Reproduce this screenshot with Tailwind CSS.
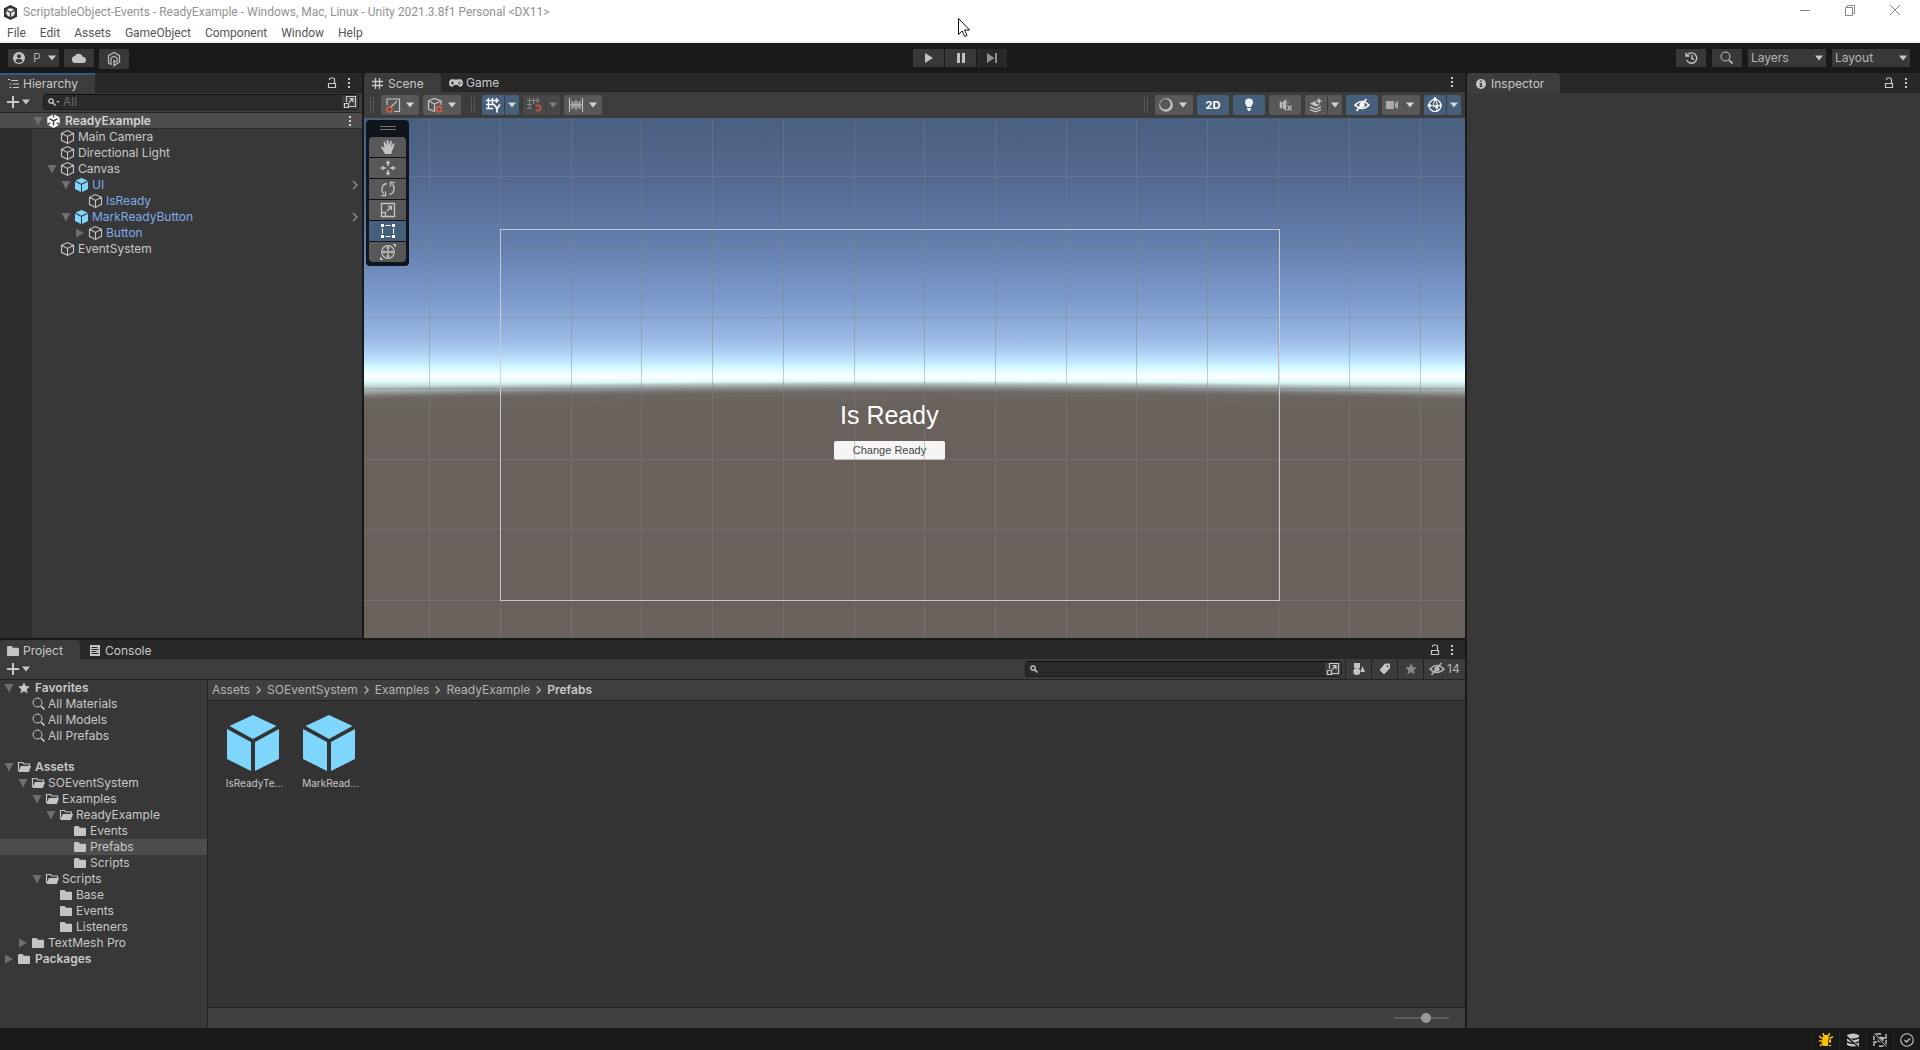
<!DOCTYPE html>
<html lang="en">
<head>
<meta charset="utf-8">
<title>ScriptableObject-Events - ReadyExample - Unity</title>
<script src="https://cdn.jsdelivr.net/npm/@tailwindcss/browser@4"></script>
</head>
<body class="relative flex h-screen min-w-[1280px] flex-col overflow-hidden bg-[#191919] font-[Inter,sans-serif] text-xs leading-4 text-[#c8c8c8]">

<!-- Icon library -->
<svg class="hidden">
  <symbol id="down" viewBox="0 0 10 10"><path d="M1 2.5h8L5 7.5z" fill="currentColor"/></symbol>
  <symbol id="fold-open" viewBox="0 0 14 16"><path d="M2.500 4h9L7 12.500z" fill="#6e6e6e"/></symbol>
  <symbol id="fold-shut" viewBox="0 0 14 16"><path d="M3 3.500v9L11 8z" fill="#6e6e6e"/></symbol>
  <symbol id="chev" viewBox="0 0 8 12"><path d="M2 2l4 4-4 4" fill="none" stroke="currentColor" stroke-width="1.5"/></symbol>
  <symbol id="dots" viewBox="0 0 4 12"><path d="M1 1h2v2H1zM1 5h2v2H1zM1 9h2v2H1z" fill="currentColor"/></symbol>
  <symbol id="lock" viewBox="0 0 10 12"><path d="M1.500 6.500h7v4h-7zM2.500 3V2.500a1.500 1.500 0 0 1 1.500-1.500h2a1.500 1.500 0 0 1 1.500 1.500v4" fill="none" stroke="currentColor" stroke-width="1.200"/></symbol>
  <symbol id="plus" viewBox="0 0 12 12"><path d="M5 0h2v5h5v2H7v5H5V7H0V5h5z" fill="currentColor"/></symbol>
  <symbol id="cube" viewBox="0 0 16 16"><path d="M8.500 1.500l6 2.800v7l-6 3.200-6-3.200v-7zM2.500 4.300l6 3.200 6-3.200M8.500 7.500v7" fill="none" stroke="#c4c4c4" stroke-width="1.100"/></symbol>
  <symbol id="prefab" viewBox="0 0 16 16"><path d="M8.500 1l6 2.600-6 3.200-6-3.200z" fill="#7fd6fd"/><path d="M2 4.600l6 3.200V15l-6-3zM15 4.600l-6 3.200V15l6-3z" fill="#7fd6fd"/></symbol>
  <symbol id="prefab-big" viewBox="0 0 52 56"><path d="M26 0l23.500 11L26 24 2.500 11zM0 14l24 13v29L0 44zM52 14L28 27v29l24-12z" fill="#7fd6fd"/></symbol>
  <symbol id="unity" viewBox="0 0 16 16"><path d="M8.500 1l6.200 3.500v7L8.500 15l-6.200-3.500v-7z" fill="#fff"/><path d="M8.500 8V12.500M8.500 8l-4-2.400M8.500 8l4-2.400M8.500 1v3.500M2.300 11.500l3-1.700M14.700 11.500l-3-1.700" stroke="#4a4a4a" stroke-width="1.500"/></symbol>
  <symbol id="folder" viewBox="0 0 16 16"><path d="M2 4.200Q2 3 3 3h3.500l1.500 1.700h5q1 0 1 1V12q0 1-1 1H3q-1 0-1-1z" fill="#c4c4c4"/></symbol>
  <symbol id="folder-open" viewBox="0 0 16 16"><path d="M2.500 12V3.500h4L8 5h5.500v2" fill="none" stroke="#c4c4c4" stroke-width="1.200"/><path d="M4.800 7H15l-2.200 6H2.500z" fill="#c4c4c4"/></symbol>
  <symbol id="star" viewBox="0 0 12 12"><path d="M6 .3l1.700 3.800 4.100.4-3.100 2.800.9 4.100L6 9.300l-3.600 2.100.9-4.100L.2 4.500l4.100-.4z" fill="currentColor"/></symbol>
  <symbol id="find" viewBox="0 0 14 14"><circle cx="5.500" cy="5.500" r="4.500" fill="none" stroke="currentColor"/><path d="M9 9l3.500 3.500" stroke="currentColor" stroke-width="1.700"/></symbol>
  <symbol id="find-small" viewBox="0 0 8 8"><circle cx="3" cy="3" r="2.200" fill="none" stroke="currentColor" stroke-width="1.300"/><path d="M4.800 4.800L7.500 7.500" stroke="currentColor" stroke-width="1.500"/></symbol>
  <symbol id="popout" viewBox="0 0 14 14"><path d="M3.500 7V1.500h9v10H6M1.500 8.500h4v4h-4zM6 7.500l4-4M6.500 3.700H10v3.500" fill="none" stroke="currentColor" stroke-width="1.200"/></symbol>
  <symbol id="eye-off" viewBox="0 0 16 14"><path d="M1 7Q8 0 15 7 8 14 1 7z" fill="none" stroke="currentColor" stroke-width="1.600"/><circle cx="8" cy="7" r="2.600" fill="currentColor"/><path d="M2.500 13L12.500 1" stroke="currentColor" stroke-width="1.600"/></symbol>
</svg>

<!-- Window title and menus -->
<header class="flex h-[43px] shrink-0 flex-col border-b-2 border-[#eff2f0] bg-white font-[Roboto,sans-serif]">
  <div class="flex h-6 items-center">
    <svg class="ml-[3px] size-[15px]" viewBox="0 0 16 16"><path d="M8 0l7 3.500v9L8 16l-7-3.500v-9z" fill="#333"/><circle cx="8" cy="8" r="4.600" fill="#e8e8e8"/><path d="M8 8v4.500M8 8L4 5.800M8 8l4-2.200" stroke="#333" stroke-width="1.300"/></svg>
    <h1 class="ml-[5px] text-[#8f948f]">ScriptableObject-Events - ReadyExample - Windows, Mac, Linux - Unity 2021.3.8f1 Personal &lt;DX11&gt;</h1>
    <div class="ml-auto mr-4 flex gap-[27px] pb-1 text-[#888]">
      <button aria-label="Minimize" class="size-[18px]"><svg viewBox="0 0 18 18"><path d="M4 9.500h10" stroke="currentColor"/></svg></button>
      <button aria-label="Restore" class="size-[18px]"><svg viewBox="0 0 18 18"><path d="M4.500 6.500h7v8h-7zM6.500 6V4.500h7v8H12" fill="none" stroke="currentColor"/></svg></button>
      <button aria-label="Close" class="size-[18px]"><svg viewBox="0 0 18 18"><path d="M4 4l10 10M14 4L4 14" stroke="currentColor"/></svg></button>
    </div>
  </div>
  <nav class="flex h-[17px] items-center gap-3.5 pl-[7px] text-[#555]">
    <button>File</button><button>Edit</button><button>Assets</button><button>GameObject</button><button>Component</button><button>Window</button><button>Help</button>
  </nav>
</header>

<!-- Main toolbar -->
<div class="grid h-[30px] shrink-0 grid-cols-3 items-start pt-1.5">
  <div class="flex gap-[5px] pl-2">
    <button class="flex h-[18px] w-[51px] items-center bg-[#383838] pl-[5px]"><svg class="size-3" viewBox="0 0 12 12"><circle cx="6" cy="6" r="6" fill="#c4c4c4"/><circle cx="6" cy="4.200" r="2" fill="#383838"/><path d="M2.500 9.500q0-2.500 2-2.500h3q2 0 2 2.500Q6 12 2.500 9.500z" fill="#383838"/></svg><span class="ml-2 text-[#a8a8a8]">P</span><svg class="ml-1.5 size-2.5"><use href="#down"/></svg></button>
    <button aria-label="Cloud" class="grid h-[18px] w-[30px] place-items-center bg-[#383838]"><svg class="h-3 w-4" viewBox="0 0 16 12"><path d="M4 11a3.500 3.500 0 0 1-.3-6.900 4.500 4.500 0 0 1 8.300.9 3 3 0 0 1 0 6z" fill="#c4c4c4"/></svg></button>
    <button aria-label="Version control" class="grid h-5 w-[30px] place-items-center rounded-xs bg-[#383838]"><svg class="size-4" viewBox="0 0 16 16"><path d="M5 13.500L2.500 12V4.700L8 1.500l5.500 3.200V11L8 14.500V8.500M5 14V7l3-1.800L11 7v3L8 11.500" fill="none" stroke="#b8b8b8" stroke-width="1.300"/></svg></button>
  </div>
  <div class="flex justify-center gap-px">
    <button aria-label="Play" class="grid h-[18px] w-[31px] place-items-center bg-[#383838]"><svg class="size-2.5" viewBox="0 0 10 10"><path d="M1 0l8 5-8 5z" fill="#c4c4c4"/></svg></button>
    <button aria-label="Pause" class="grid h-[18px] w-[31px] place-items-center bg-[#383838]"><svg class="size-2.5" viewBox="0 0 10 10"><path d="M1 0h3v10H1zM6 0h3v10H6z" fill="#c4c4c4"/></svg></button>
    <button aria-label="Step" class="grid h-[18px] w-[30px] place-items-center bg-[#282828]"><svg class="size-2.5" viewBox="0 0 10 10"><path d="M0 0l7.500 5L0 10zM8 0h2v10H8z" fill="#909090"/></svg></button>
  </div>
  <div class="flex justify-end gap-1.5 pr-2.5">
    <button aria-label="Undo history" class="grid h-[18px] w-[30px] place-items-center bg-[#383838]"><svg class="h-3 w-[13px]" viewBox="0 0 13 12"><path d="M2 3.500a5.200 5.200 0 1 1-.3 4.500M1 .800V4h3.500M7 3v3.500l2 1" fill="none" stroke="#c4c4c4" stroke-width="1.400"/></svg></button>
    <button aria-label="Search" class="grid h-[18px] w-[30px] place-items-center bg-[#383838]"><svg class="size-3.5"><use href="#find"/></svg></button>
    <label class="relative flex"><select aria-label="Layers" class="h-[18px] w-[78px] appearance-none bg-[#383838] pl-[3px] text-[#b4b4b4]"><option>Layers</option></select><svg class="pointer-events-none absolute right-0.5 top-1 size-2.5"><use href="#down"/></svg></label>
    <label class="relative flex"><select aria-label="Layout" class="h-[18px] w-[78px] appearance-none bg-[#383838] pl-[3px] text-[#b4b4b4]"><option>Layout</option></select><svg class="pointer-events-none absolute right-0.5 top-1 size-2.5"><use href="#down"/></svg></label>
  </div>
</div>

<!-- Docked panels -->
<main class="flex min-h-0 flex-1 gap-0.5">
  <div class="grid min-w-0 flex-1 grid-rows-[565fr_388fr] gap-0.5">
    <div class="flex min-h-0 gap-0.5">

      <!-- Hierarchy -->
      <section class="flex w-[362px] shrink-0 flex-col bg-[#383838]">
        <div class="flex h-5 shrink-0 items-stretch border-b border-[#232323] bg-[#282828]">
          <button class="-mb-px flex w-[95px] items-center border-t-2 border-[#2c5d87] bg-[#3c3c3c] pl-2"><svg class="h-2.5 w-[11px]" viewBox="0 0 11 10"><path d="M0 .5h2M3 1.500h7M5 5h6M5 8.500h6M1.500 5h2M1.500 8.500h2" stroke="currentColor" stroke-width="1.200"/></svg><span class="ml-1">Hierarchy</span></button>
          <div class="ml-auto mr-[11px] flex items-center gap-2.5"><button aria-label="Lock"><svg class="h-3 w-2.5"><use href="#lock"/></svg></button><button aria-label="Options"><svg class="h-3 w-1"><use href="#dots"/></svg></button></div>
        </div>
        <div class="flex h-5 shrink-0 items-start border-b border-[#232323] bg-[#3c3c3c] pl-[7px] pr-[3px] pt-px">
          <button aria-label="Create" class="flex h-4 items-center gap-0.5"><svg class="size-3"><use href="#plus"/></svg><svg class="size-2.5"><use href="#down"/></svg></button>
          <div class="ml-3 flex h-4 flex-1 items-center rounded border border-[#1c1c1c] border-t-[#0d0d0d] bg-[#2a2a2a] pl-1">
            <svg class="size-2"><use href="#find-small"/></svg><svg class="size-1"><use href="#down"/></svg>
            <input aria-label="Search hierarchy" placeholder="All" class="ml-[3px] h-3.5 min-w-0 flex-1 bg-transparent placeholder:text-[#6a6a6a]">
            <button aria-label="Open search window" class="grid h-3.5 w-4 place-items-center bg-[#3c3c3c]"><svg class="size-3.5"><use href="#popout"/></svg></button>
          </div>
        </div>
        <div class="flex h-4 shrink-0 items-center bg-[#4d4d4d] pl-[31px] pr-[10px] text-[#d4d4d4] shadow-[inset_0_-1px_#2d2d2d]"><svg class="h-4 w-3.5"><use href="#fold-open"/></svg><svg class="size-4"><use href="#unity"/></svg><b class="ml-1 font-semibold">ReadyExample</b><button aria-label="Scene options" class="ml-auto"><svg class="h-3 w-1"><use href="#dots"/></svg></button></div>
        <div class="flex min-h-0 flex-1">
          <div class="w-8 bg-[#2d2d2d]"></div>
          <ul class="flex-1 [&>li]:flex [&>li]:h-4 [&>li]:items-center">
            <li class="pl-[27px]"><svg class="size-4"><use href="#cube"/></svg><span class="ml-[3px]">Main Camera</span></li>
            <li class="pl-[27px]"><svg class="size-4"><use href="#cube"/></svg><span class="ml-[3px]">Directional Light</span></li>
            <li class="pl-[13px]"><svg class="h-4 w-3.5"><use href="#fold-open"/></svg><svg class="size-4"><use href="#cube"/></svg><span class="ml-[3px]">Canvas</span></li>
            <li class="pl-[27px] pr-[3px] text-[#7fabe8]"><svg class="h-4 w-3.5"><use href="#fold-open"/></svg><svg class="size-4"><use href="#prefab"/></svg><span class="ml-[3px]">UI</span><svg class="ml-auto h-3 w-2 text-[#8a8a8a]"><use href="#chev"/></svg></li>
            <li class="pl-[55px] text-[#7fabe8]"><svg class="size-4"><use href="#cube"/></svg><span class="ml-[3px]">IsReady</span></li>
            <li class="pl-[27px] pr-[3px] text-[#7fabe8]"><svg class="h-4 w-3.5"><use href="#fold-open"/></svg><svg class="size-4"><use href="#prefab"/></svg><span class="ml-[3px]">MarkReadyButton</span><svg class="ml-auto h-3 w-2 text-[#8a8a8a]"><use href="#chev"/></svg></li>
            <li class="pl-[41px] text-[#7fabe8]"><svg class="h-4 w-3.5"><use href="#fold-shut"/></svg><svg class="size-4"><use href="#cube"/></svg><span class="ml-[3px]">Button</span></li>
            <li class="pl-[27px]"><svg class="size-4"><use href="#cube"/></svg><span class="ml-[3px]">EventSystem</span></li>
          </ul>
        </div>
      </section>

      <!-- Scene -->
      <section class="flex min-w-0 flex-1 flex-col bg-[#3c3c3c]">
        <div class="flex h-[19px] shrink-0 items-stretch border-b border-[#232323] bg-[#282828]">
          <button class="-mb-px flex w-[77px] items-center rounded-t-sm bg-[#3c3c3c] pl-2 pt-0.5"><svg class="size-[11px]" viewBox="0 0 11 11"><path d="M3.500 0v11M7.500 0v11M0 3.500h11M0 7.500h11" stroke="currentColor" stroke-width="1.300"/></svg><span class="ml-[5px]">Scene</span></button>
          <button class="flex items-center pl-2 pt-0.5"><svg class="h-2 w-3.5" viewBox="0 0 14 8"><path d="M3.500 0Q7 1 10.500 0 14 .5 14 4t-3.500 4L9 6H5L3.500 8Q0 7.500 0 4T3.500 0z" fill="#c4c4c4"/><path d="M2 4h3M3.500 2.500v3M9 4h1M11.500 4h1M10.500 2.500v1M10.500 4.800v1" stroke="#282828"/></svg><span class="ml-[3px]">Game</span></button>
          <button aria-label="Scene tab options" class="ml-auto mr-[11px]"><svg class="h-3 w-1"><use href="#dots"/></svg></button>
        </div>
        <div class="flex h-[26px] shrink-0 items-center pl-1.5 pr-1 text-[#d2d2d2] [&_button]:flex [&_button]:h-5 [&_button]:items-center [&_button]:justify-center">
          <i class="h-4 w-1 border-x border-[#5a5a5a]"></i>
          <button aria-label="Tool handle position" class="ml-[7px] w-[38px] gap-1 rounded-xs bg-[#585858]"><svg class="size-4" viewBox="0 0 16 16"><path d="M2 8V2h12.500v12.500H9M6 10l6-6" fill="none" stroke="#c4c4c4" stroke-width="1.200"/><circle cx="4.300" cy="12.500" r="2.700" fill="none" stroke="#e8603c" stroke-width="1.300"/></svg><svg class="size-2.5"><use href="#down"/></svg></button>
          <button aria-label="Tool handle rotation" class="ml-1 w-[38px] gap-1 rounded-xs bg-[#585858]"><svg class="size-4" viewBox="0 0 16 16"><path d="M14 8V4L7.500 1.500 1.500 4v8l6 2.500M1.500 4l6 3L14 4M7.500 7v7.500" fill="none" stroke="#c4c4c4" stroke-width="1.200"/><circle cx="12" cy="12.200" r="2.700" fill="none" stroke="#e8603c" stroke-width="1.300"/></svg><svg class="size-2.5"><use href="#down"/></svg></button>
          <i class="ml-2.5 h-4 w-1 border-x border-[#5a5a5a]"></i>
          <button aria-label="Grid visibility" class="ml-[7px] w-[22px] rounded-l-xs bg-[#46607c] text-white"><svg class="size-4" viewBox="0 0 16 16"><path d="M3.500 1v11M7.500 1v7M11.500 1v5M1 3.500h13M1 7.500h8M1 11.500h7" stroke="currentColor" stroke-width="1.400"/><path d="M9 7.500l3 4 3-4M12 11v4.500" fill="none" stroke="currentColor" stroke-width="1.700"/></svg></button>
          <button aria-label="Grid options" class="ml-px w-3.5 rounded-r-xs bg-[#46607c]"><svg class="size-2.5"><use href="#down"/></svg></button>
          <button aria-label="Grid snapping" class="ml-1 w-[22px] rounded-l-xs bg-[#484848]"><svg class="size-4" viewBox="0 0 16 16"><path d="M3.500 1v11M7.500 1v6M11.500 1v5M1 3.500h13M1 7.500h5M1 11.500h5" stroke="#868686" stroke-width="1.200"/><path d="M9.500 8.500H12a2.500 2.500 0 0 1 0 5H9.500" fill="none" stroke="#b85540" stroke-width="2"/></svg></button>
          <button aria-label="Snap options" class="ml-px w-3.5 rounded-r-xs bg-[#484848] text-[#808080]"><svg class="size-2.5"><use href="#down"/></svg></button>
          <button aria-label="Snap increment" class="ml-1 w-[38px] gap-1 rounded-xs bg-[#585858]"><svg class="size-4" viewBox="0 0 16 16"><path d="M1.500 1v14M14.500 1v14M4 4v8M6 5v6M8 3v10M10 5v6M12 4v8M1.500 8h13" stroke="#c4c4c4" stroke-width="1.100"/></svg><svg class="size-2.5"><use href="#down"/></svg></button>

          <i class="ml-auto h-4 w-1 border-x border-[#5a5a5a]"></i>
          <button aria-label="Shading mode" class="ml-[7px] w-[38px] gap-1 rounded-xs bg-[#585858] pr-0.5"><svg class="size-4" viewBox="0 0 16 16"><circle cx="8" cy="8" r="6.800" fill="#c4c4c4"/><circle cx="7.300" cy="7.200" r="5.200" fill="#585858"/></svg><svg class="size-2.5"><use href="#down"/></svg></button>
          <button class="ml-1 w-8 rounded-xs bg-[#46607c] text-[11px] font-bold text-white">2D</button>
          <button aria-label="Scene lighting" class="ml-1 w-8 rounded-xs bg-[#46607c]"><svg class="size-4" viewBox="0 0 16 16"><path d="M8 1.500a4 4 0 0 1 4 4c0 2-1.500 2.800-1.800 4.500H5.800C5.500 8.300 4 7.500 4 5.500a4 4 0 0 1 4-4zM6 11h4v1.500H9.500L9 14H7l-.5-1.500H6z" fill="#eee"/></svg></button>
          <button aria-label="Scene audio" class="ml-1 w-8 rounded-xs bg-[#585858]"><svg class="size-4" viewBox="0 0 16 16"><path d="M3 5h2v6H3zM6 5l3-2.500v11L6 11zM11 4v3" fill="#bbb" stroke="#bbb" stroke-width=".6"/><path d="M10.500 8.500l4 5M14.500 8.500l-4 5" stroke="#bbb" stroke-width="1.300"/></svg></button>
          <button aria-label="Effects" class="ml-1 w-[22px] rounded-l-xs bg-[#585858]"><svg class="size-4" viewBox="0 0 16 16"><path d="M2 6.500l5-2.500 1 2.500 4 1.500-4.500 1.500zM2 9l5.500 2.500L13 9v1.500L7.500 13 2 10.500zM2 12l5.500 2L13 12v1.200L7.500 15.500 2 13.200zM11 .5l1 2.500 2.500 1L12 5l-1 2.500L10 5 7.500 4 10 3z" fill="#c4c4c4"/></svg></button>
          <button aria-label="Effects options" class="ml-px w-3.5 rounded-r-xs bg-[#585858]"><svg class="size-2.5"><use href="#down"/></svg></button>
          <button aria-label="Scene visibility" class="ml-1 w-8 rounded-xs bg-[#46607c] text-white"><svg class="h-3.5 w-4"><use href="#eye-off"/></svg></button>
          <button aria-label="Camera settings" class="ml-1 w-[38px] gap-1.5 rounded-xs bg-[#585858] pr-0.5"><svg class="size-3.5" viewBox="0 0 14 14"><path d="M1 3h8v8H1zM10 5l3-2v8l-3-2z" fill="#aaa"/></svg><svg class="size-2.5"><use href="#down"/></svg></button>
          <button aria-label="Gizmos" class="ml-1 w-[22px] rounded-l-xs bg-[#46607c] text-white"><svg class="size-4" viewBox="0 0 16 16"><circle cx="8" cy="8.500" r="6" fill="none" stroke="currentColor" stroke-width="1.200"/><path d="M8 2q4 6 1.500 12M2 8q6 3 12 0M8 2Q6 8 7 9" fill="none" stroke="currentColor"/><circle cx="8" cy="2" r="1.700" fill="currentColor"/><circle cx="2.300" cy="8.500" r="1.700" fill="currentColor"/><circle cx="9.500" cy="9.500" r="1.700" fill="currentColor"/><circle cx="13.700" cy="8.500" r="1.200" fill="currentColor"/></svg></button>
          <button aria-label="Gizmo options" class="ml-px w-3.5 rounded-r-xs bg-[#46607c]"><svg class="size-2.5"><use href="#down"/></svg></button>
        </div>

        <!-- Viewport: ground haze over a sky gradient -->
        <div class="relative min-h-0 flex-1 overflow-hidden bg-[radial-gradient(circle_25000px_at_50%_25000px,#6a615c_24690px,#69615c_24712px,#6c6661_24725px,#777876_24728px,#9aa3a0_24732px,transparent_24737px),linear-gradient(#4a607f_0px,#526890_60px,#6580ae_130px,#7b9acb_180px,#9bb9e4_222px,#aed2f5_235px,#c4eaff_245px,#d6fcff_250px,#fbffff_259px,#dcfafa_264px,#b8c8c6_270px,#b8c8c6_275px)]">
          <p class="absolute left-[476px] top-[282px] font-['Liberation_Sans',Arial,sans-serif] text-[25px] leading-[30px] text-white">Is Ready</p>
          <button class="absolute left-[470px] top-[323px] h-[19px] w-[111px] rounded-xs bg-[#f5f5f5] pb-0.5 font-['Liberation_Sans',Arial,sans-serif] text-[11px] text-[#444]">Change Ready</button>
          <svg class="pointer-events-none absolute inset-0 size-full" shape-rendering="crispEdges">
            <g stroke="#848484" stroke-opacity=".42">
              <path d="M65.500 0v2000M136.500 0v2000M207.500 0v2000M277.500 0v2000M348.500 0v2000M419.500 0v2000M490.500 0v2000M560.500 0v2000M631.500 0v2000M702.500 0v2000M772.500 0v2000M843.500 0v2000M914.500 0v2000M985.500 0v2000M1056.500 0v2000"/>
              <path d="M0 58.500h4000M0 128.500h4000M0 199.500h4000M0 270.500h4000M0 341.500h4000M0 411.500h4000M0 482.500h4000"/>
            </g>
            <rect x="136.500" y="111.500" width="779" height="371" fill="none" stroke="#d0d6de" stroke-opacity=".85"/>
          </svg>
          <div class="absolute left-0.5 top-0.5 flex w-[43px] flex-col gap-px rounded bg-[#10151d] px-[3px] pb-1 pt-[17px] text-[#c4c4c4] [&>button]:grid [&>button]:h-5 [&>button]:place-items-center [&>button]:bg-[#585858]">
            <i class="absolute left-3.5 top-1.5 h-1 w-4 border-y border-[#777]"></i>
            <button aria-label="View tool" class="rounded-t-sm"><svg class="size-4" viewBox="0 0 16 16"><path d="M5 15Q3 11 1 8.500q0-1.500 2-.5l1.500 1.500L3.500 3q.8-1.200 1.700 0L6.500 7 6.700 1.300q.9-1 1.800 0L8.800 7l1.500-5q1-.8 1.700.3L11 8l2-3.500q1.300-.5 1.500.6Q13.500 10 12 12l-.7 3z" fill="currentColor"/></svg></button>
            <button aria-label="Move tool"><svg class="size-4" viewBox="0 0 16 16"><path d="M8 .3L10.500 3.500h-5zM8 15.700L10.500 12.500h-5zM.3 8L3.500 5.500v5zM15.700 8L12.500 5.500v5z" fill="currentColor"/><path d="M8 3v3M8 10v3M3 8h3M10 8h3" stroke="currentColor" stroke-width="1.500"/></svg></button>
            <button aria-label="Rotate tool"><svg class="size-4" viewBox="0 0 16 16"><path d="M6.500 2.500a6 6 0 0 0-3 10M9.500 13.500a6 6 0 0 0 3-10M1.500 14.500h4v-4M14.500 1.500h-4v4" fill="none" stroke="currentColor" stroke-width="1.300"/></svg></button>
            <button aria-label="Scale tool"><svg class="size-4" viewBox="0 0 16 16"><path d="M1.500 1.500h13v13h-13zM1.500 10.500h4v4M7 9l4.500-4.500M8 4.500h3.500V8" fill="none" stroke="currentColor" stroke-width="1.300"/></svg></button>
            <button aria-label="Rect tool" class="bg-[#46607c]! text-white"><svg class="size-4" viewBox="0 0 16 16"><path d="M1 1h3v3H1zM12 1h3v3h-3zM1 12h3v3H1zM12 12h3v3h-3z" fill="currentColor"/><path d="M5.500 2.500h5M5.500 13.500h5M2.500 5.500v5M13.500 5.500v5" stroke="currentColor"/></svg></button>
            <button aria-label="Transform tool" class="rounded-b-sm"><svg class="size-4" viewBox="0 0 16 16"><circle cx="8" cy="8" r="6.300" fill="none" stroke="currentColor" stroke-width="1.200"/><path d="M8 3v10M3 8h10" stroke="currentColor" stroke-width="1.300"/><path d="M8 2l2 2.500H6zM8 14l2-2.500H6zM2 8l2.500-2v4zM14 8l-2.500-2v4zM12.500 0H16v3.500zM0 12.500V16h3.500z" fill="currentColor"/></svg></button>
          </div>
        </div>
      </section>
    </div>

    <!-- Project -->
    <section class="flex min-h-0 flex-col bg-[#3c3c3c]">
      <div class="flex h-[19px] shrink-0 items-stretch bg-[#282828]">
        <button class="flex w-20 items-center rounded-t-sm bg-[#3c3c3c] pl-1.5 pt-0.5"><svg class="-ml-px size-4" viewBox="1 0 14 16"><use href="#folder" width="16" height="16"/></svg><span class="ml-0.5">Project</span></button>
        <button class="flex items-center pl-2.5 pt-0.5"><svg class="h-[11px] w-2.5" viewBox="0 0 10 11"><path d="M0 0h10v11H0z" fill="#c4c4c4"/><path d="M1.500 2.500h6M1.500 4.500h7M1.500 6.500h5M1.500 8.500h7" stroke="#282828"/></svg><span class="ml-[5px]">Console</span></button>
        <div class="ml-auto mr-[11px] flex items-center gap-2.5"><button aria-label="Lock"><svg class="h-3 w-2.5"><use href="#lock"/></svg></button><button aria-label="Options"><svg class="h-3 w-1"><use href="#dots"/></svg></button></div>
      </div>
      <div class="flex h-[21px] shrink-0 items-center border-b border-[#232323] pl-[7px]">
        <button aria-label="Create" class="flex items-center gap-0.5"><svg class="size-3"><use href="#plus"/></svg><svg class="size-2.5"><use href="#down"/></svg></button>
        <div class="ml-auto mr-[3px] flex h-4 w-[317px] items-center rounded border border-[#1c1c1c] border-t-[#0d0d0d] bg-[#2a2a2a] pl-1">
          <svg class="size-2"><use href="#find-small"/></svg>
          <input aria-label="Search project" class="ml-1 h-3.5 min-w-0 flex-1 bg-transparent">
          <button aria-label="Open search window" class="grid h-3.5 w-4 place-items-center bg-[#3c3c3c]"><svg class="size-3.5"><use href="#popout"/></svg></button>
        </div>
        <button aria-label="Search by type" class="grid h-full w-[26px] place-items-center border-l border-[#232323]"><svg class="size-3" viewBox="0 0 12 12"><path d="M1 0h6v5H1zM9.500 3L12 9H7.500z" fill="#c4c4c4"/><circle cx="3.800" cy="8.500" r="3.500" fill="#c4c4c4"/></svg></button>
        <button aria-label="Search by label" class="grid h-full w-[26px] place-items-center border-l border-[#232323]"><svg class="size-3" viewBox="0 0 12 12"><path d="M6 1h4.500V5L5 11 1 7z" fill="#c4c4c4" stroke="#c4c4c4" stroke-linejoin="round"/><circle cx="8.500" cy="3.200" r=".9" fill="#3c3c3c"/></svg></button>
        <button aria-label="Save search" class="grid h-full w-[26px] place-items-center border-l border-[#232323] text-[#868686]"><svg class="size-3"><use href="#star"/></svg></button>
        <button class="flex h-full w-[42px] items-center border-l border-[#232323] pl-[5px] text-[#b4b4b4]"><svg class="h-3.5 w-4"><use href="#eye-off"/></svg><span class="ml-0.5">14</span></button>
      </div>
      <div class="flex min-h-0 flex-1">
        <ul class="w-[208px] shrink-0 overflow-hidden border-r border-[#232323] bg-[#383838] [&>li]:flex [&>li]:h-4 [&>li]:items-center">
          <li class="pl-0.5"><svg class="h-4 w-3.5"><use href="#fold-open"/></svg><svg class="mx-0.5 size-3"><use href="#star"/></svg><b class="ml-[3px] font-semibold">Favorites</b></li>
          <li class="pl-8"><svg class="size-3.5"><use href="#find"/></svg><span class="ml-0.5">All Materials</span></li>
          <li class="pl-8"><svg class="size-3.5"><use href="#find"/></svg><span class="ml-0.5">All Models</span></li>
          <li class="pl-8"><svg class="size-3.5"><use href="#find"/></svg><span class="ml-0.5">All Prefabs</span></li>
          <li class="mt-[15px] pl-0.5"><svg class="h-4 w-3.5"><use href="#fold-open"/></svg><svg class="size-4"><use href="#folder-open"/></svg><b class="ml-[3px] font-semibold">Assets</b></li>
          <li class="pl-4"><svg class="h-4 w-3.5"><use href="#fold-open"/></svg><svg class="size-4"><use href="#folder-open"/></svg><span class="ml-0.5">SOEventSystem</span></li>
          <li class="pl-[30px]"><svg class="h-4 w-3.5"><use href="#fold-open"/></svg><svg class="size-4"><use href="#folder-open"/></svg><span class="ml-0.5">Examples</span></li>
          <li class="pl-11"><svg class="h-4 w-3.5"><use href="#fold-open"/></svg><svg class="size-4"><use href="#folder-open"/></svg><span class="ml-0.5">ReadyExample</span></li>
          <li class="pl-[72px]"><svg class="size-4"><use href="#folder"/></svg><span class="ml-0.5">Events</span></li>
          <li class="bg-[#4d4d4d] pl-[72px]"><svg class="size-4"><use href="#folder"/></svg><span class="ml-0.5">Prefabs</span></li>
          <li class="pl-[72px]"><svg class="size-4"><use href="#folder"/></svg><span class="ml-0.5">Scripts</span></li>
          <li class="pl-[30px]"><svg class="h-4 w-3.5"><use href="#fold-open"/></svg><svg class="size-4"><use href="#folder-open"/></svg><span class="ml-0.5">Scripts</span></li>
          <li class="pl-[58px]"><svg class="size-4"><use href="#folder"/></svg><span class="ml-0.5">Base</span></li>
          <li class="pl-[58px]"><svg class="size-4"><use href="#folder"/></svg><span class="ml-0.5">Events</span></li>
          <li class="pl-[58px]"><svg class="size-4"><use href="#folder"/></svg><span class="ml-0.5">Listeners</span></li>
          <li class="pl-4"><svg class="h-4 w-3.5"><use href="#fold-shut"/></svg><svg class="size-4"><use href="#folder"/></svg><span class="ml-0.5">TextMesh Pro</span></li>
          <li class="pl-0.5"><svg class="h-4 w-3.5"><use href="#fold-shut"/></svg><svg class="size-4"><use href="#folder"/></svg><b class="ml-[3px] font-semibold">Packages</b></li>
        </ul>
        <div class="flex min-w-0 flex-1 flex-col bg-[#333]">
          <nav class="flex h-[21px] shrink-0 items-center gap-[5px] border-b border-[#232323] bg-[#3f3f3f] pl-1 text-[#b4b4b4]">
            <a href="#">Assets</a><svg class="h-3 w-[7px]"><use href="#chev"/></svg><a href="#">SOEventSystem</a><svg class="h-3 w-[7px]"><use href="#chev"/></svg><a href="#">Examples</a><svg class="h-3 w-[7px]"><use href="#chev"/></svg><a href="#">ReadyExample</a><svg class="h-3 w-[7px]"><use href="#chev"/></svg><a href="#" class="font-semibold text-[#c8c8c8]">Prefabs</a>
          </nav>
          <div class="flex flex-1 items-start gap-3.5 pl-3.5 pt-3.5">
            <figure class="flex w-[62px] flex-col items-center"><svg class="h-14 w-[52px]"><use href="#prefab-big"/></svg><figcaption class="mt-1.5 pl-[3px] text-[10px] leading-3">IsReadyTe...</figcaption></figure>
            <figure class="flex w-[62px] flex-col items-center"><svg class="h-14 w-[52px]"><use href="#prefab-big"/></svg><figcaption class="mt-1.5 pl-[3px] text-[10px] leading-3">MarkRead...</figcaption></figure>
          </div>
          <div class="flex h-[21px] shrink-0 items-center justify-end border-t border-[#232323] bg-[#3f3f3f] pr-4">
            <input type="range" aria-label="Icon size" value="60" class="h-0.5 w-[55px] appearance-none bg-[#5e5e5e] [&::-webkit-slider-thumb]:size-2.5 [&::-webkit-slider-thumb]:appearance-none [&::-webkit-slider-thumb]:rounded-full [&::-webkit-slider-thumb]:bg-[#999]">
          </div>
        </div>
      </div>
    </section>
  </div>

  <!-- Inspector -->
  <section class="flex w-[453px] shrink-0 flex-col bg-[#383838]">
    <div class="flex h-5 items-stretch border-b border-[#232323] bg-[#282828]">
      <button class="-mb-px flex w-[93px] items-center rounded-t-sm bg-[#3c3c3c] pl-[9px] pt-0.5"><svg class="size-2.5" viewBox="0 0 10 10"><circle cx="5" cy="5" r="5" fill="#c4c4c4"/><path d="M4.200 1.500h1.600v1.500H4.200zM3.500 4h2.300v3h.8v1H3.500V7h.7V5h-.7z" fill="#3c3c3c"/></svg><span class="ml-[5px]">Inspector</span></button>
      <div class="ml-auto mr-3 flex items-center gap-2.5"><button aria-label="Lock"><svg class="h-3 w-2.5"><use href="#lock"/></svg></button><button aria-label="Options"><svg class="h-3 w-1"><use href="#dots"/></svg></button></div>
    </div>
  </section>
</main>

<!-- Status bar -->
<footer class="flex h-[22px] shrink-0 items-center justify-end pt-0.5 [&>button]:grid [&>button]:h-full [&>button]:w-[27px] [&>button]:place-items-center [&>button]:border-l [&>button]:border-[#252525]">
  <button aria-label="Debugger"><svg class="size-3.5" viewBox="0 0 14 14"><path d="M5 2h4l1 3-1 8H4L3 9l1-5z" fill="#ffc107"/><path d="M4 0l1 3M10.500 0L9.500 3M0 3l4 3M14 3.500L10 6M0 8h4M1 13l3-3" stroke="#ffc107" stroke-width="1.500"/><path d="M9.500 6h3v4h-3zM9.500 11.500h3v2h-3z" fill="#ffc107" stroke="#191919" stroke-width=".8"/></svg></button>
  <button aria-label="Cache server"><svg class="size-3.5" viewBox="0 0 14 14"><path d="M1 2q6-3 12 0v2q-6 3-12 0zM1 5.500q6 3 12 0V8q-6 3-12 0zM1 9.500q6 3 12 0V12q-6 3-12 0z" fill="#c4c4c4"/><path d="M0 3l13 11" stroke="#191919" stroke-width="2"/><path d="M1 2l12.500 12" stroke="#c4c4c4"/></svg></button>
  <button aria-label="Auto refresh"><svg class="size-3.5" viewBox="0 0 14 14"><path d="M1 7V3q3-3 7-2M13 7v4q-3 3-7 2M4 1.500H1M13 1v4H9.500M1 13V9h3" fill="none" stroke="#c4c4c4" stroke-width="1.400"/><circle cx="7.500" cy="6.500" r="3" fill="#c4c4c4"/><path d="M1 1l12.500 12.500" stroke="#191919" stroke-width="2.500"/><path d="M1.500 .5l12 13" stroke="#c4c4c4"/></svg></button>
  <button aria-label="Background tasks"><svg class="size-3.5" viewBox="0 0 14 14"><circle cx="7" cy="7" r="6.300" fill="none" stroke="#c4c4c4" stroke-width="1.100"/><path d="M4.500 7l2 2L10 5.500" fill="none" stroke="#c4c4c4" stroke-width="1.300"/></svg></button>
</footer>

<!-- Pointer -->
<svg class="pointer-events-none absolute left-1/2 top-[18px] ml-[-2px] h-5 w-3" viewBox="0 0 12 20"><path d="M.5 .5v16l3.700-3.500 2.500 5.500 2.300-1-2.400-5.500h5z" fill="#fff" stroke="#112"/></svg>
</body>
</html>
